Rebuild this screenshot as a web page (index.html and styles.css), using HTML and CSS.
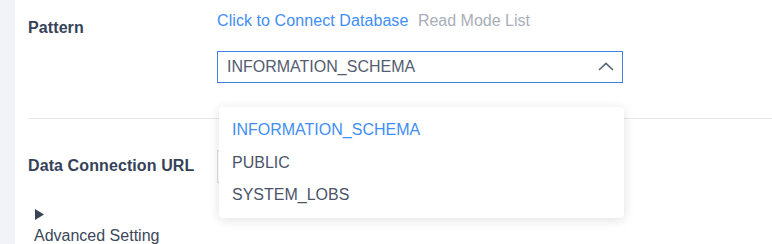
FILE: index.html
```html
<!DOCTYPE html>
<html>
<head>
<meta charset="utf-8">
<link rel="stylesheet" href="styles.css">
</head>
<body>
<div class="page">
  <div class="rail"></div>
  <div class="main">
    <div class="row row-pattern">
      <div class="label">Pattern</div>
      <div class="field">
        <div class="links">
          <span class="link">Click to Connect Database</span>
          <span class="link-muted">Read Mode List</span>
        </div>
        <div class="select">
          <span class="select-value">INFORMATION_SCHEMA</span>
          <svg class="chevron" width="16" height="9" viewBox="0 0 16 9"><polyline points="1,8 8,1.3 15,8" fill="none" stroke="#5b6579" stroke-width="1.6"/></svg>
        </div>
      </div>
    </div>
    <div class="divider"></div>
    <div class="row row-url">
      <div class="label">Data Connection URL</div>
      <div class="field">
        <div class="input"></div>
      </div>
    </div>
    <div class="advanced">
      <svg class="tri" width="9" height="11" viewBox="0 0 9 11"><polygon points="0,0 9,5.5 0,11" fill="#3a4457"/></svg>
      <div class="adv-text">Advanced Setting</div>
    </div>
  </div>
</div>
<div class="dropdown">
  <div class="option active">INFORMATION_SCHEMA</div>
  <div class="option">PUBLIC</div>
  <div class="option">SYSTEM_LOBS</div>
</div>
</body>
</html>
```
FILE: styles.css
```css
* { box-sizing: border-box; }
html, body { margin: 0; padding: 0; background: #fff; }
body {
  font-family: "Liberation Sans", Arial, sans-serif;
  font-size: 16px;
  color: #3c4759;
  width: 772px;
  height: 244px;
  overflow: hidden;
  position: relative;
}
.page { display: flex; height: 244px; }
.rail { width: 15px; background: #f1f3f8; flex: none; }
.main { flex: 1; padding-left: 13px; padding-top: 11px; }
.row { display: flex; }
.label {
  width: 189px;
  flex: none;
  font-weight: bold;
  line-height: 20px;
  color: #35425a;
  padding-top: 7px;
  letter-spacing: 0.1px;
}
.links { line-height: 20px; height: 20px; white-space: nowrap; }
.link { color: #3f8ef5; letter-spacing: 0.08px; }
.link-muted { color: #a9aeb8; margin-left: 5px; }
.select {
  margin-top: 20px;
  width: 406px;
  height: 32px;
  border: 1px solid #3f84e3;
  display: flex;
  align-items: center;
  justify-content: space-between;
  padding: 0 8px 0 9px;
}
.select-value { line-height: 30px; color: #535d70; }
.chevron { display: block; margin-top: -2px; }
.divider { height: 1px; background: #e6e8ec; margin-top: 35px; }
.row-url { margin-top: 31px; }
.row-url .label { padding-top: 6px; }
.input { width: 406px; height: 33px; border: 1px solid #dcdfe6; }
.advanced { padding-left: 6px; margin-top: 26px; }
.tri { display: block; margin-left: 1px; }
.adv-text { line-height: 20px; margin-top: 6px; color: #3c4759; }
.dropdown {
  position: absolute;
  left: 219px;
  top: 107px;
  width: 405px;
  height: 111px;
  background: #fff;
  border-radius: 4px;
  box-shadow: 0 2px 12px rgba(0, 0, 0, 0.12);
  padding: 7px 0 0 13px;
}
.option { line-height: 32.5px; height: 32.5px; color: #4b5568; }
.option.active { color: #3f8ef5; }
```
